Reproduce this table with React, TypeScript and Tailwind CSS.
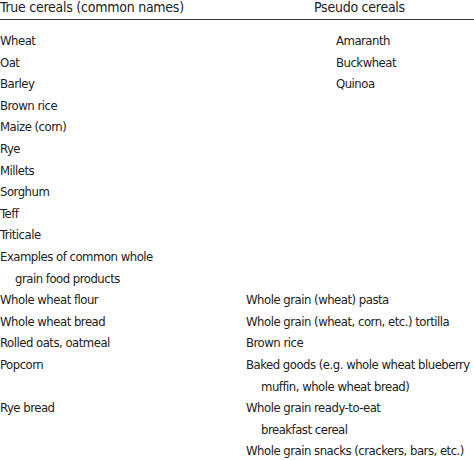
import * as React from 'react'

const top: [string, string][] = [
   ['Wheat', 'Amaranth'],
   ['Oat', 'Buckwheat'],
   ['Barley', 'Quinoa'],
   ['Brown rice', ''],
   ['Maize (corn)', ''],
   ['Rye', ''],
   ['Millets', ''],
   ['Sorghum', ''],
   ['Teff', ''],
   ['Triticale', '']
]

// each cell: list of lines; lines after the first are indented
const bottom: [string[], string[]][] = [
   [['Whole wheat flour'], ['Whole grain (wheat) pasta']],
   [['Whole wheat bread'], ['Whole grain (wheat, corn, etc.) tortilla']],
   [['Rolled oats, oatmeal'], ['Brown rice']],
   [['Popcorn'], ['Baked goods (e.g. whole wheat blueberry', 'muffin, whole wheat bread)']],
   [['Rye bread'], ['Whole grain ready-to-eat', 'breakfast cereal']],
   [[], ['Whole grain snacks (crackers, bars, etc.)']]
]

const Lines: React.FC<{ lines: string[] }> = ({ lines }) => (
   <div>
      {lines.map((l, i) => (
         <div key={i} className={i > 0 ? 'pl-[15px]' : ''}>
            {l}
         </div>
      ))}
   </div>
)

const App: React.FC = () => {
   return (
      <div
         className="h-[460px] w-[474px] overflow-hidden whitespace-nowrap bg-white text-[13px] leading-[21.6px] tracking-[-0.5px] text-[#222]"
         style={{ fontFamily: '"DejaVu Sans Condensed", "Liberation Sans", sans-serif' }}
      >
         <div className="flex border-b border-[#333] pb-[5px] text-[14px] leading-[14px] tracking-[-0.25px]">
            <div className="w-[314px]">True cereals (common names)</div>
            <div>Pseudo cereals</div>
         </div>
         <div className="pt-[10px]">
            {top.map(([a, b]) => (
               <div key={a} className="flex">
                  <div className="w-[336px]">{a}</div>
                  <div>{b}</div>
               </div>
            ))}
            <Lines lines={['Examples of common whole', 'grain food products']} />
            {bottom.map(([a, b], i) => (
               <div key={i} className="flex">
                  <div className="w-[246px] shrink-0">
                     <Lines lines={a} />
                  </div>
                  <Lines lines={b} />
               </div>
            ))}
         </div>
      </div>
   )
}

export default App
